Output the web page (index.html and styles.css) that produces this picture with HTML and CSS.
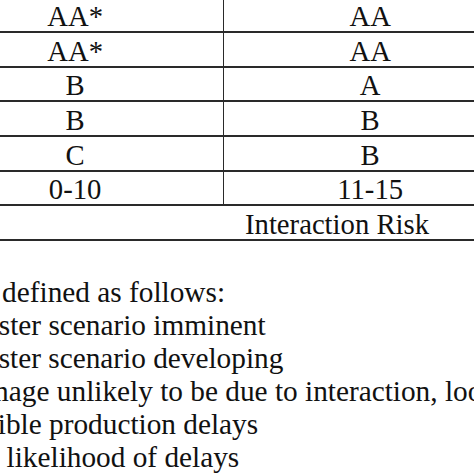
FILE: index.html
```html
<!DOCTYPE html>
<html lang="en">
<head>
<meta charset="utf-8">
<title>Risk table</title>
<link rel="stylesheet" href="styles.css">
</head>
<body>
<div class="page">
  <div class="table">
    <div class="row"><div class="cell left">AA*</div><div class="cell">AA</div></div>
    <div class="row"><div class="cell left">AA*</div><div class="cell">AA</div></div>
    <div class="row"><div class="cell left">B</div><div class="cell">A</div></div>
    <div class="row"><div class="cell left">B</div><div class="cell">B</div></div>
    <div class="row"><div class="cell left">C</div><div class="cell">B</div></div>
    <div class="row"><div class="cell left">0-10</div><div class="cell">11-15</div></div>
    <div class="row single"><div class="cell label">Interaction Risk</div></div>
  </div>
  <div class="notes">
    <div class="line l1">Categories are defined as follows:</div>
    <div class="line l2">AA: disaster scenario imminent</div>
    <div class="line l3">A: disaster scenario developing</div>
    <div class="line l4">B: damage unlikely to be due to interaction, look for other causes</div>
    <div class="line l5">C: possible production delays</div>
    <div class="line l6">D: lower likelihood of delays</div>
  </div>
</div>
</body>
</html>
```

FILE: styles.css
```css
html, body {
  margin: 0;
  padding: 0;
  background: #ffffff;
}

body {
  width: 474px;
  height: 474px;
  overflow: hidden;
  font-family: "Liberation Serif", "Tinos", "Times New Roman", "DejaVu Serif", serif;
  font-size: 28.7px;
  color: #111111;
}

.page {
  width: 474px;
  height: 474px;
  overflow: hidden;
}

.table {
  width: 589px;
  margin-left: -73px;
  margin-top: -1.3px;
}

.row {
  display: grid;
  grid-template-columns: 297.3px 1fr;
  height: 34.6px;
  box-sizing: border-box;
  border-bottom: 2px solid #2a2a2a;
}

.row.single {
  grid-template-columns: 1fr;
}

.cell {
  text-align: center;
  padding-top: 3.6px;
  line-height: 28.7px;
  white-space: nowrap;
}

.cell.left {
  border-right: 1.5px solid #2a2a2a;
}

.cell.label {
  text-align: left;
  padding-left: 318px;
}

.notes {
  margin-top: 35px;
  font-size: 29.3px;
}

.line {
  line-height: 33px;
  white-space: nowrap;
}

.l1 { margin-left: -173.6px; }
.l2 { margin-left: -106.2px; }
.l3 { margin-left: -85.2px; }
.l4 { margin-left: -76.6px; }
.l5 { margin-left: -89.3px; }
.l6 { margin-left: -104.1px; }
```
